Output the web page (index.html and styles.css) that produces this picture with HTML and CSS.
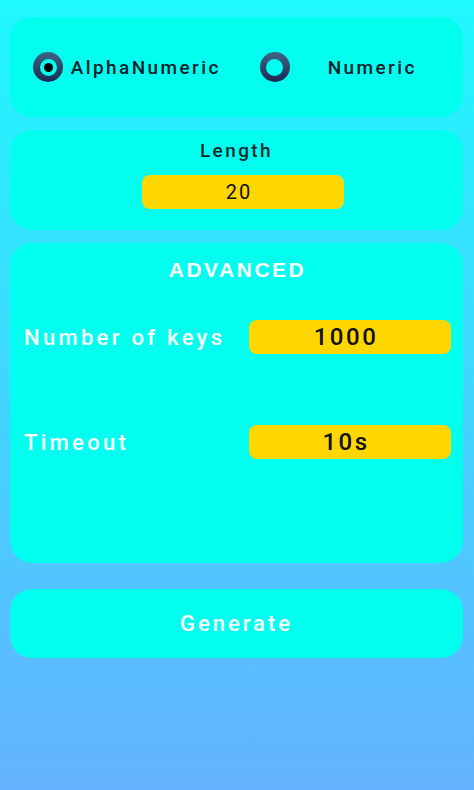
FILE: index.html
```html
<!DOCTYPE html>
<html lang="en">
<head>
<meta charset="utf-8">
<title>Key Generator</title>
<link rel="stylesheet" href="styles.css">
</head>
<body>
<main class="screen">
  <section class="card card-mode">
    <label class="mode">
      <span class="radio radio-on"><span class="radio-hole"><span class="radio-dot"></span></span></span>
      <span class="mode-label">AlphaNumeric</span>
    </label>
    <label class="mode">
      <span class="radio"><span class="radio-hole"></span></span>
      <span class="mode-label">Numeric</span>
    </label>
  </section>

  <section class="card card-length">
    <div class="length-title">Length</div>
    <div class="length-row">
      <div class="field field-length">20</div>
    </div>
  </section>

  <section class="card card-advanced">
    <div class="advanced-title">ADVANCED</div>
    <div class="setting setting-keys">
      <span class="setting-label">Number of keys</span>
      <div class="field field-setting">1000</div>
    </div>
    <div class="setting setting-timeout">
      <span class="setting-label">Timeout</span>
      <div class="field field-setting">10s</div>
    </div>
  </section>

  <button class="card generate" type="button">Generate</button>
</main>
</body>
</html>
```

FILE: styles.css
```css
html, body {
  margin: 0;
  height: 100%;
}

body {
  background: linear-gradient(180deg, #1ff8ff 0%, #64b2ff 100%);
  font-family: "Liberation Sans", Arial, sans-serif;
}

.screen {
  display: flex;
  flex-direction: column;
  gap: 13px;
  padding: 17px 11px 0 10px;
}

.card {
  background: #00ffee;
  border-radius: 22px;
}

/* mode selector */
.card-mode {
  height: 100px;
  display: grid;
  grid-template-columns: 1fr 1fr;
  align-items: center;
}

.mode {
  display: flex;
  align-items: center;
  gap: 6px;
  padding: 0 14px 0 23px;
}

.radio {
  width: 30px;
  height: 30px;
  border-radius: 50%;
  background: linear-gradient(180deg, #3f6585 0%, #1b2a52 100%);
  display: flex;
  align-items: center;
  justify-content: center;
  flex: none;
}

.radio-hole {
  width: 17px;
  height: 17px;
  border-radius: 50%;
  background: #00ffee;
  display: flex;
  align-items: center;
  justify-content: center;
}

.radio-dot {
  width: 9px;
  height: 9px;
  border-radius: 50%;
  background: #000;
}

.mode-label {
  flex: 1;
  text-align: center;
  font-family: Roboto, "Liberation Sans", sans-serif;
  font-weight: 500;
  font-size: 19px;
  letter-spacing: 2.4px;
  color: #07202b;
}

/* length */
.card-length {
  height: 100px;
  display: flex;
  flex-direction: column;
  align-items: center;
  padding-top: 9px;
  box-sizing: border-box;
}

.length-title {
  font-family: Roboto, "Liberation Sans", sans-serif;
  font-weight: 500;
  font-size: 19px;
  letter-spacing: 2.4px;
  color: #0b2b30;
  line-height: 24px;
}

.length-row {
  padding-left: 13px;
  margin-top: 12px;
}

.field {
  background: #ffd700;
  border-radius: 8px;
  height: 34px;
  box-sizing: border-box;
  padding-right: 8px;
  display: flex;
  align-items: center;
  justify-content: center;
  font-family: Roboto, "Liberation Sans", sans-serif;
  font-weight: 500;
  color: #111;
}

.field-length {
  width: 202px;
  font-size: 20px;
  font-weight: 400;
  letter-spacing: 2px;
}

/* advanced */
.card-advanced {
  height: 320px;
  box-sizing: border-box;
  padding: 14px 12px 0 14px;
  display: flex;
  flex-direction: column;
}

.advanced-title {
  text-align: center;
  color: #fff;
  font-weight: bold;
  font-size: 21px;
  letter-spacing: 2.5px;
  line-height: 26px;
}

.setting {
  display: flex;
  align-items: center;
  justify-content: space-between;
}

.setting-keys {
  margin-top: 37px;
}

.setting-timeout {
  margin-top: 71px;
}

.setting-label {
  color: #fff;
  font-family: Roboto, "Liberation Sans", sans-serif;
  font-weight: 500;
  font-size: 22px;
  letter-spacing: 3.3px;
}

.field-setting {
  width: 202px;
  font-size: 24px;
  letter-spacing: 2.5px;
}

/* generate button */
.generate {
  margin-top: 13px;
  height: 69px;
  border: 0;
  width: 100%;
  color: #fff;
  font-family: Roboto, "Liberation Sans", sans-serif;
  font-weight: 500;
  font-size: 22px;
  letter-spacing: 3px;
  cursor: pointer;
}
```
